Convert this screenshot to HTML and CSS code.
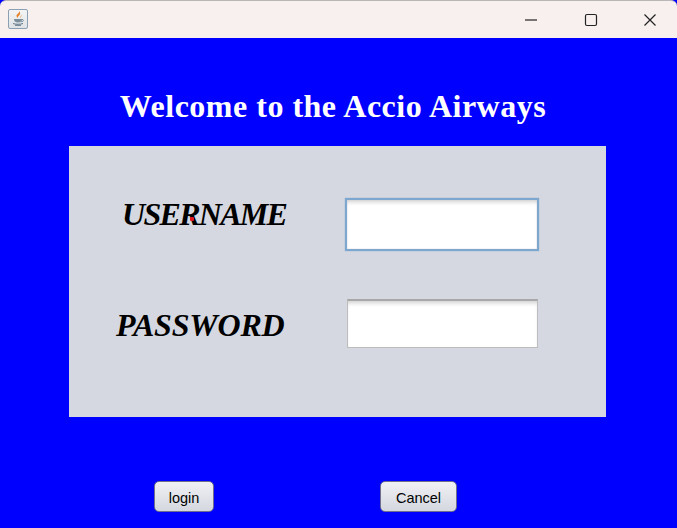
FILE: index.html
```html
<!DOCTYPE html>
<html lang="en">
  <head>
    <meta charset="UTF-8" />
    <meta name="viewport" content="width=device-width, initial-scale=1.0" />
    <title>Login</title>
    <link rel="stylesheet" href="styles.css">
  </head>
  <body>
    <div class="titlebar">
      <div class="app-icon">
        <svg width="18" height="18" viewBox="0 0 18 18">
          <path d="M10 1c1 2-3 3.500-2.500 5 .3 1 1 1.500 1.500 2-.3-1.500 .5-2 1.500-3 .8-1 1-2.500-.5-4z" fill="#e8832a" />
          <path d="M12 4c.5 1.500-.8 2.500-1 4 1-.5 2.200-2 1-4z" fill="#f0a860" />
          <path d="M5 9h8c0 2-1 3.500-4 3.500S5 11 5 9z" fill="#7b8e9c" />
          <path d="M4 13.500c2 1 8 1 10 0M6 15.300h6" fill="none" stroke="#5f7686" stroke-width="1" />
          <path d="M13 9.500c2 0 2 2-.8 2.300" fill="none" stroke="#6f8494" stroke-width="1" />
        </svg>
      </div>
      <div class="window-controls">
        <span class="control">
          <svg width="14" height="14" viewBox="0 0 14 14"><path d="M0 7h12" stroke="#222" stroke-width="1.200" /></svg>
        </span>
        <span class="control">
          <svg width="14" height="14" viewBox="0 0 14 14"><rect x="1.500" y="1.500" width="11" height="11" rx="1.500" fill="none" stroke="#222" stroke-width="1.200" /></svg>
        </span>
        <span class="control">
          <svg width="14" height="14" viewBox="0 0 14 14"><path d="M1.500 1.500l11 11M12.500 1.500l-11 11" stroke="#222" stroke-width="1.200" /></svg>
        </span>
      </div>
    </div>
    <div class="content">
      <h1 class="welcome">Welcome to the Accio Airways</h1>
      <form class="login-panel">
        <div class="form-row">
          <label class="field-label username-label">USERNAME<span class="red-dot"></span></label>
          <input type="text" class="field focused" />
        </div>
        <div class="form-row password-row">
          <label class="field-label password-label">PASSWORD</label>
          <input type="password" class="field" />
        </div>
      </form>
      <div class="buttons">
        <button type="button" class="btn login-btn">login</button>
        <button type="button" class="btn cancel-btn">Cancel</button>
      </div>
    </div>
  </body>
</html>
```

FILE: styles.css
```css
* {
  box-sizing: border-box;
  margin: 0;
  padding: 0;
}
html,
body {
  height: 100%;
  overflow: hidden;
  background-color: #0000ff;
}
body {
  font-family: "Liberation Sans", Arial, sans-serif;
}
/* Window title bar */
.titlebar {
  height: 38px;
  display: flex;
  align-items: center;
  justify-content: space-between;
  background-color: #f7f0ee;
  border-top: 1px solid #b9b7b6;
  border-radius: 6px 6px 0 0;
}
.app-icon {
  width: 20px;
  height: 20px;
  margin-left: 8px;
  margin-top: -2px;
  border: 1px solid #8ba0b2;
  border-radius: 2px;
  background: linear-gradient(#f4f4f4, #dfe3e6);
  display: flex;
  align-items: center;
  justify-content: center;
}
.window-controls {
  display: flex;
  margin-right: -2px;
}
.control {
  width: 59px;
  height: 37px;
  display: flex;
  align-items: center;
  justify-content: center;
}
/* Main content */
.content {
  height: 490px;
  background-color: #0000ff;
  padding-top: 50px;
}
.welcome {
  height: 36px;
  margin-left: -11px;
  text-align: center;
  font-family: "Liberation Serif", "Times New Roman", serif;
  font-size: 32px;
  line-height: 36px;
  letter-spacing: 0.5px;
  font-weight: bold;
  color: #fff;
}
.login-panel {
  width: 537px;
  height: 271px;
  margin: 22px 0 0 69px;
  padding: 52px 67px 0 47px;
  background-color: #d5d8e0;
}
.form-row {
  display: flex;
  align-items: center;
  justify-content: space-between;
  height: 53px;
}
.password-row {
  margin-top: 47px;
  height: 51px;
}
.field-label {
  position: relative;
  font-family: "Liberation Serif", "Times New Roman", serif;
  font-size: 32px;
  font-weight: bold;
  font-style: italic;
  color: #000;
}
.username-label {
  margin-left: 6px;
  margin-top: -21px;
  letter-spacing: -1.700px;
}
.password-label {
  margin-top: 4px;
  letter-spacing: -0.200px;
}
.red-dot {
  position: absolute;
  left: 68px;
  top: 21px;
  width: 4px;
  height: 4px;
  border-radius: 1px;
  background-color: #e5141c;
}
.field {
  width: 191px;
  height: 49px;
  margin-right: 1px;
  background-color: #fff;
  border: 1px solid #bdbdbd;
  border-top: 2px solid #a8a8a8;
  box-shadow: inset 0 4px 4px -2px #cfcfcf;
  outline: none;
}
.field.focused {
  width: 194px;
  height: 53px;
  margin-right: 0;
  border: 2px solid #7ea7d0;
  border-top: 2px solid #7ea7d0;
  box-shadow: inset 0 4px 4px -2px #cfcfcf, inset 0 0 1px #9a9a9a, 0 0 1px #7ea7d0;
}
/* Bottom buttons */
.buttons {
  display: flex;
  margin: 64px 0 0 154px;
}
.btn {
  height: 31px;
  padding-top: 2px;
  border: 1px solid #6d6f8c;
  border-radius: 5px;
  background: linear-gradient(#f0f1f5, #d4d7df);
  font-family: "Liberation Sans", Arial, sans-serif;
  font-size: 14.500px;
  color: #000;
  cursor: pointer;
}
.login-btn {
  width: 60px;
}
.cancel-btn {
  width: 77px;
  margin-left: 166px;
}
```
